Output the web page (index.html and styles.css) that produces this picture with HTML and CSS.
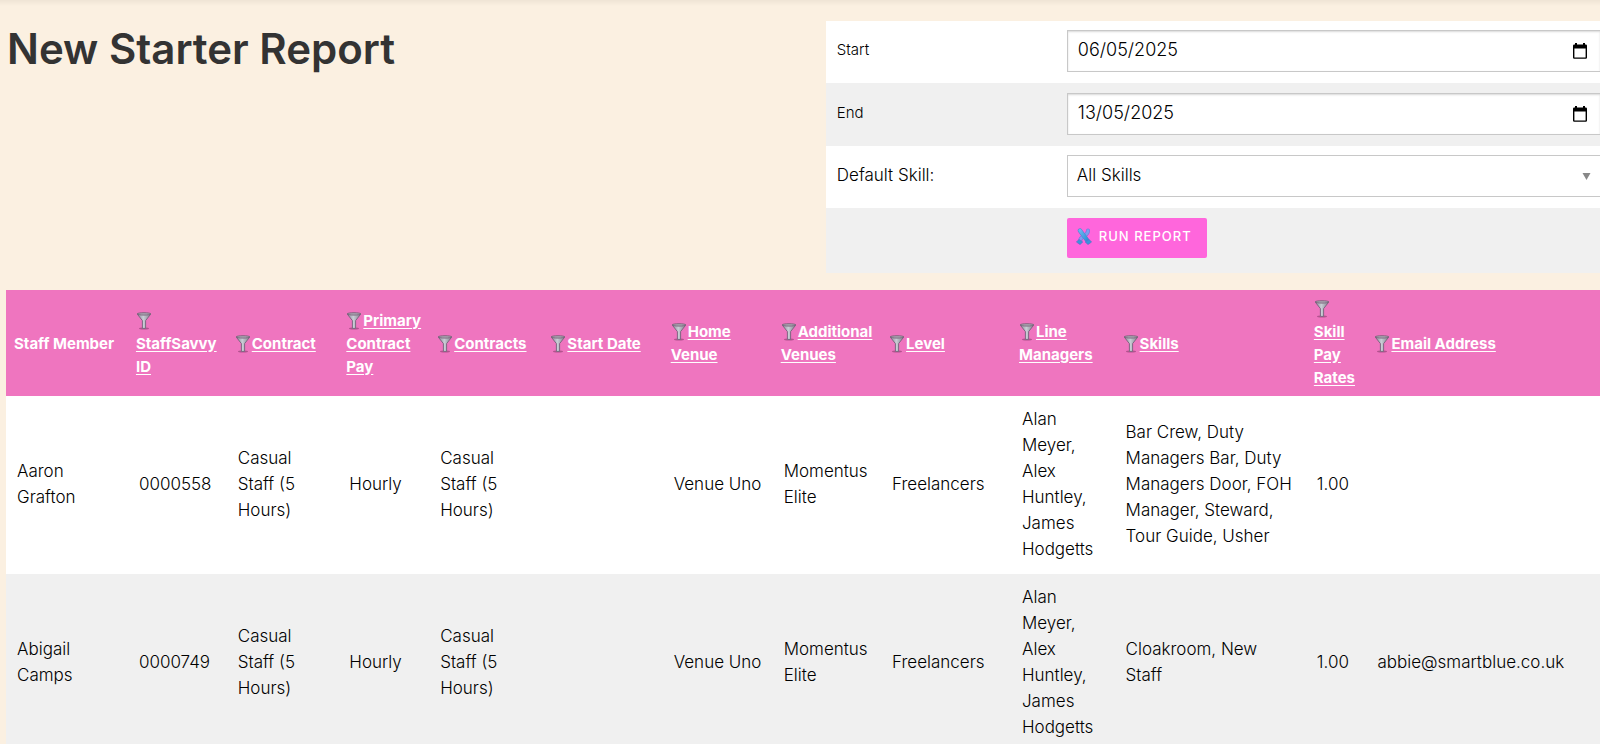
FILE: index.html
```html
<!DOCTYPE html>
<html lang="en-GB">
<head>
<meta charset="utf-8">
<meta name="viewport" content="width=device-width, initial-scale=1">
<title>New Starter Report</title>
<link rel="stylesheet" href="styles.css">
</head>
<body>
<svg class="sprite" aria-hidden="true">
  <defs>
    <linearGradient id="metal" x1="0" x2="1" y1="0" y2="0">
      <stop offset="0" stop-color="#8d8696"/>
      <stop offset=".45" stop-color="#c9ced6"/>
      <stop offset="1" stop-color="#85808c"/>
    </linearGradient>
    <linearGradient id="blue" x1="0" x2="1" y1="0" y2="1">
      <stop offset="0" stop-color="#6cb4ee"/>
      <stop offset="1" stop-color="#1f8fd6"/>
    </linearGradient>
    <symbol id="funnel" viewBox="0 0 16 18">
      <ellipse cx="8" cy="16.6" rx="5" ry="1" fill="#8a3a6e" opacity=".6"/>
      <path d="M1.2 2 6.4 8.6V16.4H9.6V8.6L14.8 2Z" fill="url(#metal)" stroke="#77607a" stroke-width=".9" stroke-linejoin="round"/>
      <ellipse cx="8" cy="1.9" rx="6.9" ry="1.2" fill="#aaa7b2" stroke="#745a74" stroke-width=".8"/>
    </symbol>
    <symbol id="run" viewBox="0 0 16 17">
      <path d="M12 2.6Q12 6 8 8T4 13.4" fill="none" stroke="#7a78dc" stroke-width="4" stroke-linecap="round"/>
      <path d="M12 2.6Q12 6 8 8T4 13.4" fill="none" stroke="#7d9cf0" stroke-width="2.6" stroke-linecap="round"/>
      <path d="M4 2.6 12 13.4" stroke="#5a80d0" stroke-width="4.4" stroke-linecap="round"/>
      <path d="M4 2.6 12 13.4" stroke="url(#blue)" stroke-width="3.4" stroke-linecap="round"/>
      <path d="M.4 14 3 11.4 6.8 14 4 16.6ZM9.2 14 13 11.4 15.6 14 12 16.6Z" fill="#3a94dc" stroke="#6a6ac8" stroke-width=".7"/>
    </symbol>
    <symbol id="calendar" viewBox="0 0 14 16">
      <path d="M2 0H4V1.6H10V0H12V1.6H12.8Q14 1.6 14 2.8V14.6Q14 15.8 12.8 15.8H1.2Q0 15.8 0 14.6V2.8Q0 1.6 1.2 1.6H2ZM1.4 5.6V14.4H12.6V5.6Z" fill="#000" fill-rule="evenodd"/>
    </symbol>
  </defs>
</svg>

<header class="top">
  <h1 class="title">New Starter Report</h1>
  <form class="filters">
    <div class="row">
      <label class="label small" for="start">Start</label>
      <div class="field">
        <input class="control date" id="start" type="text" value="06/05/2025">
        <button class="picker" type="button" aria-label="Choose start date"><svg><use href="#calendar"/></svg></button>
      </div>
    </div>
    <div class="row">
      <label class="label small" for="end">End</label>
      <div class="field">
        <input class="control date" id="end" type="text" value="13/05/2025">
        <button class="picker" type="button" aria-label="Choose end date"><svg><use href="#calendar"/></svg></button>
      </div>
    </div>
    <div class="row">
      <label class="label" for="skill">Default Skill:</label>
      <div class="field">
        <select class="control" id="skill"><option>All Skills</option></select>
        <svg class="arrow" viewBox="0 0 8 7" aria-hidden="true"><path d="M0 0H8L4 7Z"/></svg>
      </div>
    </div>
    <div class="row actions">
      <span class="label"></span>
      <div class="field">
        <button class="run" type="submit"><svg aria-hidden="true"><use href="#run"/></svg>RUN REPORT</button>
      </div>
    </div>
  </form>
</header>

<main class="report">
<table class="staff">
  <colgroup>
    <col class="c-name"><col class="c-id"><col class="c-contract"><col class="c-pay"><col class="c-contracts"><col class="c-start"><col class="c-home"><col class="c-venues"><col class="c-level"><col class="c-managers"><col class="c-skills"><col class="c-rates"><col>
  </colgroup>
  <thead>
    <tr>
      <th>Staff Member</th>
      <th><svg class="funnel"><use href="#funnel"/></svg> <a href="#">StaffSavvy ID</a></th>
      <th><svg class="funnel"><use href="#funnel"/></svg><a href="#">Contract</a></th>
      <th><svg class="funnel"><use href="#funnel"/></svg><a href="#">Primary Contract Pay</a></th>
      <th><svg class="funnel"><use href="#funnel"/></svg><a href="#">Contracts</a></th>
      <th><svg class="funnel"><use href="#funnel"/></svg><a href="#">Start Date</a></th>
      <th><svg class="funnel"><use href="#funnel"/></svg><a href="#">Home Venue</a></th>
      <th><svg class="funnel"><use href="#funnel"/></svg><a href="#">Additional Venues</a></th>
      <th><svg class="funnel"><use href="#funnel"/></svg><a href="#">Level</a></th>
      <th><svg class="funnel"><use href="#funnel"/></svg><a href="#">Line Managers</a></th>
      <th><svg class="funnel"><use href="#funnel"/></svg><a href="#">Skills</a></th>
      <th><svg class="funnel"><use href="#funnel"/></svg> <a href="#">Skill Pay Rates</a></th>
      <th><svg class="funnel"><use href="#funnel"/></svg><a href="#">Email Address</a></th>
    </tr>
  </thead>
  <tbody>
    <tr>
      <td>Aaron Grafton</td><td>0000558</td><td>Casual Staff (5 Hours)</td><td>Hourly</td><td>Casual Staff (5 Hours)</td><td></td><td>Venue Uno</td><td>Momentus Elite</td><td>Freelancers</td><td>Alan Meyer, Alex Huntley, James Hodgetts</td><td>Bar Crew, Duty Managers Bar, Duty Managers Door, FOH Manager, Steward, Tour Guide, Usher</td><td>1.00</td><td></td>
    </tr>
    <tr>
      <td>Abigail Camps</td><td>0000749</td><td>Casual Staff (5 Hours)</td><td>Hourly</td><td>Casual Staff (5 Hours)</td><td></td><td>Venue Uno</td><td>Momentus Elite</td><td>Freelancers</td><td>Alan Meyer, Alex Huntley, James Hodgetts</td><td>Cloakroom, New Staff</td><td>1.00</td><td>abbie@smartblue.co.uk</td>
    </tr>
  </tbody>
</table>
</main>
</body>
</html>
```
FILE: styles.css
```css
* { box-sizing: border-box; }

body {
  margin: 0;
  background: linear-gradient(#efe4d5, #fbf0e1 6px) no-repeat #fbf0e1;
  color: #000;
  font: 300 17px/26px Inter, "Open Sans", sans-serif;
  overflow-x: hidden;
}

.sprite { display: block; width: 0; height: 0; }

.top {
  display: flex;
  justify-content: space-between;
  align-items: flex-start;
  padding: 21px 0 17px 7px;
}

.title {
  margin: 0;
  color: #333;
  font-size: 42px;
  font-weight: 600;
  line-height: 56px;
}

.filters { width: 48.6%; background: #fff; }

.row {
  display: flex;
  align-items: flex-start;
  padding: 9px 0 11px 11px;
}
.row:nth-child(even) { padding-top: 10px; background: #f0f0f0; }
.row.actions { padding-bottom: 15px; }

.label { width: 230px; flex: none; line-height: 40px; }
.label.small { font-size: 15px; }

.field { position: relative; flex: 1; display: flex; }

.control {
  width: 100%;
  height: 42px;
  padding: 0 9px 2px;
  border: 1px solid #c8c8c8;
  border-right: 0;
  border-radius: 0;
  background: #fff;
  color: #000;
  font: inherit;
  appearance: none;
}
.control.date {
  padding: 0 10px 3px;
  box-shadow: inset 0 1px 2px rgba(0, 0, 0, .15);
  font-size: 18px;
}

.picker {
  position: absolute;
  top: 13px;
  right: 13px;
  width: 14px;
  height: 16px;
  padding: 0;
  border: 0;
  background: none;
}
.picker svg { display: block; width: 14px; height: 16px; }

.arrow {
  position: absolute;
  top: 18px;
  right: 9px;
  width: 9px;
  height: 7px;
  fill: #888;
  pointer-events: none;
}

.run {
  display: flex;
  align-items: center;
  gap: 7px;
  height: 40px;
  padding: 0 15px 4px 9px;
  border: 0;
  border-radius: 2px;
  background: #ff66dc;
  color: #fff;
  font: 500 13px/20px Inter, "Open Sans", sans-serif;
  letter-spacing: 1px;
}
.run svg { width: 16px; height: 17px; }

.report { padding-left: 6px; }

.staff {
  width: 100%;
  table-layout: fixed;
  border-collapse: collapse;
  background: #fff;
}
.c-name { width: 7.65%; }
.c-id { width: 6.2%; }
.c-contract { width: 7%; }
.c-pay { width: 5.7%; }
.c-contracts { width: 7.1%; }
.c-start { width: 7.55%; }
.c-home { width: 6.9%; }
.c-venues { width: 6.8%; }
.c-level { width: 8.15%; }
.c-managers { width: 6.5%; }
.c-skills { width: 12%; }
.c-rates { width: 3.8%; }

.staff th {
  padding: 7px 6px 7px 8px;
  background: #ef75bf;
  color: #fff;
  font-size: 15px;
  font-weight: 700;
  line-height: 23px;
  text-align: left;
  vertical-align: middle;
}
.staff th a { color: inherit; text-underline-offset: 2px; }

.funnel {
  width: 16px;
  height: 18px;
  margin-right: 1px;
  vertical-align: -4px;
}

.staff td {
  padding: 10px 8px 12px 11px;
  vertical-align: middle;
}
.staff tbody tr:nth-child(even) { background: #f0f0f0; }
```
